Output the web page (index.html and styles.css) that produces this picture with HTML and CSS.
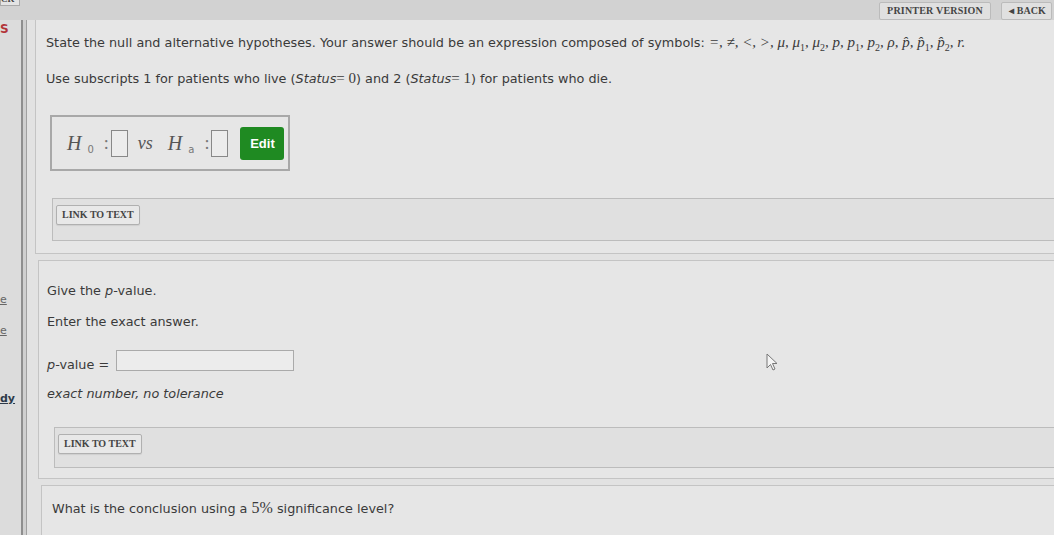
FILE: index.html
```html
<!DOCTYPE html>
<html>
<head>
<meta charset="utf-8">
<link rel="stylesheet" href="styles.css">
</head>
<body>
<div class="topbar">
  <span class="cutbtn">CK</span>
  <div class="topbtns">
    <span class="tbtn">PRINTER VERSION</span>
    <span class="tbtn back">&#9666; BACK</span>
  </div>
</div>
<div class="frame">
  <div class="sidebar">
    <div class="side-s">S</div>
    <div class="side-link l1">e</div>
    <div class="side-link l2">e</div>
    <div class="side-link l3">dy</div>
  </div>
  <div class="divider"></div>
  <div class="main">
    <div class="section s1">
      <p class="q">State the null and alternative hypotheses. Your answer should be an expression composed of symbols: <span class="m">=, &#8800;, &lt;, &gt;, &#956;, &#956;<sub>1</sub>, &#956;<sub>2</sub>, p, p<sub>1</sub>, p<sub>2</sub>, &#961;, p&#770;, p&#770;<sub>1</sub>, p&#770;<sub>2</sub>, r.</span></p>
      <p class="q q2">Use subscripts 1 for patients who live (<i>Status</i><span class="mr">= 0</span>) and 2 (<i>Status</i><span class="mr">= 1</span>) for patients who die.</p>
      <div class="answer">
        <span class="H">H</span><span class="sub">0</span><span class="colon">:</span><span class="slot"></span>
        <span class="vs">vs</span>
        <span class="H">H</span><span class="sub">a</span><span class="colon">:</span><span class="slot"></span>
        <span class="edit">Edit</span>
      </div>
      <div class="linkpanel"><span class="linkbtn">LINK TO TEXT</span></div>
    </div>
    <div class="section s2">
      <p class="q">Give the <i>p</i>-value.</p>
      <p class="q q3">Enter the exact answer.</p>
      <div class="pv"><span><i>p</i>-value =</span><span class="input"></span></div>
      <p class="hint">exact number, no tolerance</p>
      <div class="linkpanel lp2"><span class="linkbtn">LINK TO TEXT</span></div>
    </div>
    <div class="section s3">
      <p class="q">What is the conclusion using a <span class="mr big">5%</span> significance level?</p>
    </div>
  </div>
</div>
<svg class="cursor" width="14" height="20" viewBox="0 0 14 20"><path d="M1 1 L1 15 L4.5 11.5 L7 17 L9 16 L6.5 10.5 L11 10.5 Z" fill="#f4f4f4" stroke="#777" stroke-width="1"/></svg>
</body>
</html>
```
FILE: styles.css
```css
html, body {
  margin: 0;
  padding: 0;
}
body {
  width: 1054px;
  height: 535px;
  overflow: hidden;
  background: #dedede;
  font-family: "DejaVu Sans", Verdana, sans-serif;
  color: #3a3a3a;
  position: relative;
}
.topbar {
  height: 20px;
  background: #d2d2d2;
  display: flex;
  justify-content: space-between;
  align-items: flex-start;
}
.cutbtn {
  margin-top: -6px;
  width: 18px;
  height: 11px;
  font-family: "Liberation Serif", serif;
  font-weight: bold;
  font-size: 9px;
  background: #e4e4e4;
  border: 1px solid #aaa;
  border-top: none;
  overflow: hidden;
  line-height: 11px;
  color: #444;
}
.topbtns {
  display: flex;
  gap: 10px;
  padding-top: 2px;
  padding-right: 2px;
}
.tbtn {
  height: 16px;
  line-height: 16px;
  padding: 0 7px;
  background: #e0e0e0;
  border: 1px solid #bbb;
  border-radius: 2px;
  font-family: "Liberation Serif", serif;
  font-weight: bold;
  font-size: 10px;
  color: #444;
  letter-spacing: 0.2px;
}
.tbtn.back {
  padding: 0 5px 0 7px;
  letter-spacing: 0.1px;
}
.frame {
  display: flex;
  height: 515px;
}
.sidebar {
  width: 21px;
  background: #dcdcdc;
  font-size: 11px;
}
.side-s {
  color: #b3353a;
  font-weight: bold;
  font-size: 12px;
  margin-top: 2px;
}
.side-link {
  color: #666;
  text-decoration: underline;
  font-size: 11px;
}
.l1 { margin-top: 257px; }
.l2 { margin-top: 18px; }
.l3 { margin-top: 55px; color: #2d3a4a; font-weight: bold; }
.divider {
  width: 3px;
  border-left: 2px solid #8e8e8e;
  border-right: 1px solid #a0a0a0;
  background: #cfcfcf;
}
.main {
  flex: 1;
  padding-left: 7px;
  background: #e2e2e2;
  display: flex;
  flex-direction: column;
  gap: 6px;
}
.section {
  background: #e6e6e6;
  border: 1px solid #c4c4c4;
  border-right: none;
  padding: 0 0 11px 10px;
}
.s1 {
  border-top: none;
  margin-left: 1px;
  padding-top: 14px;
  padding-bottom: 12px;
}
.s2 {
  margin-left: 4px;
  padding-top: 22px;
  padding-left: 8px;
  padding-bottom: 10px;
}
.s3 {
  margin-left: 7px;
  padding-top: 14px;
  padding-left: 10px;
  flex: 1;
  border-bottom: none;
}
.q {
  margin: 0;
  font-size: 12.8px;
  line-height: 16px;
}
.q2 { margin-top: 14px; }
.q3 { margin-top: 15px; }
.m, .mr {
  font-family: "Liberation Serif", serif;
  font-size: 15px;
}
.m { font-style: italic; }
.m sub { font-size: 10px; font-style: normal; }
.mr.big { font-size: 16px; }
.answer {
  margin-top: 28px;
  margin-left: 4px;
  width: 236px;
  height: 52px;
  border: 2px solid #a8a8a8;
  background: #e6e6e6;
  display: flex;
  align-items: center;
  font-family: "Liberation Serif", serif;
  color: #555;
}
.H {
  font-style: italic;
  font-size: 20px;
  margin-left: 15px;
}
.sub {
  font-size: 10px;
  font-family: "DejaVu Sans", sans-serif;
  align-self: flex-end;
  margin-bottom: 14px;
  margin-left: 6px;
  color: #777;
}
.colon {
  font-size: 18px;
  margin-left: 10px;
  margin-right: 2px;
  color: #777;
}
.slot {
  width: 15px;
  height: 25px;
  border: 1px solid #888;
  background: #ececec;
}
.vs {
  font-style: italic;
  font-size: 18px;
  margin-left: 10px;
}
.vs + .H { margin-left: 15px; }
.edit {
  margin-left: 12px;
  width: 44px;
  height: 33px;
  line-height: 33px;
  text-align: center;
  background: #1f8a22;
  color: #fff;
  border-radius: 3px;
  font-family: "Liberation Sans", Arial, sans-serif;
  font-weight: bold;
  font-size: 13px;
}
.linkpanel {
  margin-top: 27px;
  margin-left: 6px;
  border: 1px solid #bcbcbc;
  border-right: none;
  background: #e0e0e0;
  display: flex;
  align-items: flex-start;
  padding-left: 3px;
  padding-top: 6px;
  box-sizing: border-box;
  height: 43px;
}
.linkbtn {
  height: 18px;
  line-height: 18px;
  padding: 0 5px;
  border: 1px solid #b0b0b0;
  border-radius: 2px;
  background: #e8e8e8;
  font-family: "Liberation Serif", serif;
  font-weight: bold;
  font-size: 10px;
  color: #444;
  box-shadow: 0 1px 1px rgba(0,0,0,0.08);
}
.lp2 {
  margin-top: 25px;
  margin-left: 7px;
  height: 41px;
}
.pv {
  margin-top: 20px;
  display: flex;
  align-items: flex-end;
  gap: 7px;
  font-size: 12.8px;
  line-height: 16px;
}
.pv span:first-child { margin-bottom: -2px; }
.input {
  width: 176px;
  height: 19px;
  border: 1px solid #aaa;
  background: #ececec;
}
.hint {
  margin: 15px 0 0;
  font-style: italic;
  font-size: 12.8px;
  line-height: 16px;
}
.cursor {
  position: absolute;
  left: 766px;
  top: 353px;
}
```
